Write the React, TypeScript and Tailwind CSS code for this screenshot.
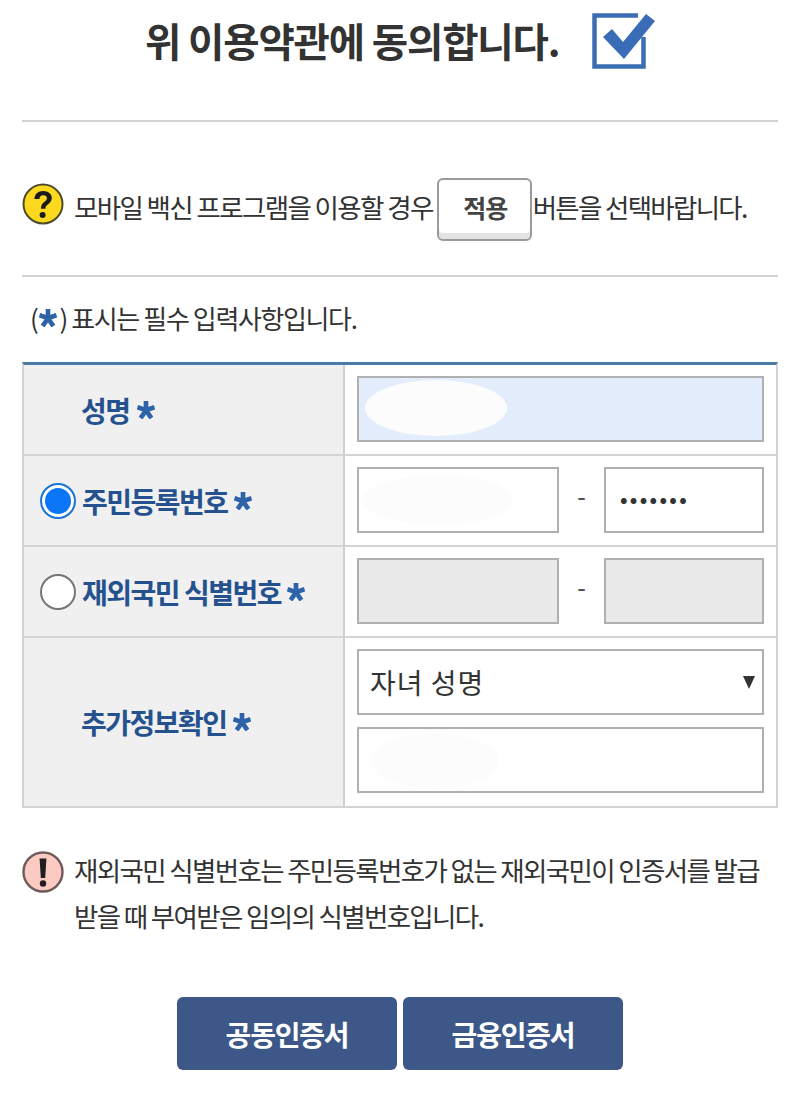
const font = "font-['Noto_Sans_CJK_KR','Noto_Sans',sans-serif]";

function Star({ className = "" }: { className?: string }) {
  return (
    <svg viewBox="0 0 20 20" className={`inline-block w-[18px] h-[18px] ${className}`}>
      <g stroke="#2f63a8" strokeWidth="5.2" strokeLinecap="butt">
        <line x1="10" y1="0" x2="10" y2="12" />
        <line x1="0.5" y1="7" x2="12" y2="10.8" />
        <line x1="19.5" y1="7" x2="8" y2="10.8" />
        <line x1="4" y1="19" x2="11" y2="9" />
        <line x1="16" y1="19" x2="9" y2="9" />
      </g>
    </svg>
  );
}

function Radio({ checked }: { checked: boolean }) {
  return checked ? (
    <span className="shrink-0 w-[36px] h-[36px] rounded-full border-[2px] border-[#1a73d8] bg-white flex items-center justify-center">
      <span className="w-[26px] h-[26px] rounded-full bg-[#0a76f6]" />
    </span>
  ) : (
    <span className="shrink-0 w-[36px] h-[36px] rounded-full border-[2px] border-[#767676] bg-white" />
  );
}

function Label({ children, className = "" }: { children: React.ReactNode; className?: string }) {
  return (
    <span className={`text-[28px] font-bold text-[#25528f] tracking-[-1.5px] leading-none ${className}`}>{children}</span>
  );
}

function Box({ className = "", children }: { className?: string; children?: React.ReactNode }) {
  return (
    <div className={`relative h-[66px] border-[2px] border-[#b0b0b0] ${className}`}>{children}</div>
  );
}

function Head({ children, className = "" }: { children: React.ReactNode; className?: string }) {
  return (
    <div className={`bg-[#f0f0f0] border-r-[2px] border-r-[#d0d0d0] flex items-center ${className}`}>{children}</div>
  );
}

function Dash() {
  return <span className="w-[45px] text-center text-[24px] font-medium leading-[58px] text-[#555]">-</span>;
}

function HelpIcon() {
  return (
    <svg viewBox="0 0 42 42" className="w-[42px] h-[42px] shrink-0 -translate-y-[3px]">
      <circle cx="21" cy="21" r="19.5" fill="#fcd91f" stroke="#4f4a2a" strokeWidth="2" />
      <path d="M12.5 16c0-5 3.6-8 8.7-8 5.2 0 8.6 2.9 8.6 7 0 3.2-1.9 4.8-4 6.4-1.8 1.3-2.4 2.2-2.4 4.4h-4.4c0-3.5 1-5.1 3.2-6.8 1.7-1.3 2.7-2.2 2.7-3.7 0-1.8-1.3-3-3.6-3-2.4 0-3.8 1.5-3.9 3.7z" fill="#1b1b1b" />
      <circle cx="20.6" cy="32" r="3" fill="#1b1b1b" />
    </svg>
  );
}

function AlertIcon() {
  return (
    <svg viewBox="0 0 42 42" className="w-[42px] h-[42px] shrink-0">
      <circle cx="21" cy="21" r="19.5" fill="#fcc9c3" stroke="#6e5b59" strokeWidth="2.4" />
      <path d="M17.6 7.5h6.8l-1.2 19.5h-4.4z" fill="#1f1f1f" />
      <circle cx="21" cy="32.5" r="3.2" fill="#1f1f1f" />
    </svg>
  );
}

export default function App() {
  return (
    <div className={`${font} w-[800px] h-[1098px] bg-white overflow-hidden px-[22px] text-[#333]`}>
      <div className="h-[120px] pt-[13px] flex items-start">
        <h1 className="ml-[123px] -mt-[1px] text-[39.5px] leading-[56px] font-bold tracking-[-1.15px] text-[#333] whitespace-nowrap">
          위 이용약관에 동의합니다.
        </h1>
        <svg viewBox="0 0 64 56" className="w-[64px] h-[56px] ml-[33px] shrink-0">
          <path d="M46 2.5H2.5v51h49V24" fill="none" stroke="#3b6db5" strokeWidth="4.5" />
          <path d="M11 24l9-8 11 13L54 1l9 7-31 38z" fill="#3a6cb8" />
        </svg>
      </div>
      <div className="h-[2px] bg-[#d2d2d2]" />

      <div className="h-[153px] flex items-center pt-[16px] whitespace-nowrap">
        <HelpIcon />
        <span className="ml-[10px] text-[26.5px] tracking-[-1.62px] text-[#333]">모바일 백신 프로그램을 이용할 경우</span>
        <button className="ml-[4px] mt-[6px] w-[95px] h-[63px] rounded-[6px] border-[2px] border-[#9a9a9a] bg-white shadow-[inset_0_-6px_0_#e4e4e4] text-[25px] font-bold text-[#444] tracking-[-1px] flex items-center justify-center pb-[4px] pl-[2px]">
          적용
        </button>
        <span className="ml-[1px] text-[26.5px] tracking-[-1.7px] text-[#333]">버튼을 선택바랍니다.</span>
      </div>
      <div className="h-[2px] bg-[#d2d2d2]" />

      <div className="h-[85px] pt-[22px] pl-[8px] flex items-start text-[26px] leading-[38px] tracking-[-1.38px] text-[#333] whitespace-nowrap">
        <span>(</span>
        <Star className="mt-[10px] mx-[2px]" />
        <span>) 표시는 필수 입력사항입니다.</span>
      </div>

      <div className="w-[756px] border-x-[2px] border-b-[2px] border-[#d4d4d4] border-t-[3px] border-t-[#4d7aa6] grid grid-cols-[321px_1fr] grid-rows-[91px_91px_91px_168px] [&>*]:border-b-[2px] [&>*]:border-b-[#d4d4d4] [&>*:nth-last-child(-n+2)]:border-b-0">
        <Head className="pl-[57px] gap-[7px]">
          <Label>성명</Label>
          <Star />
        </Head>
        <div className="pl-[12px] pr-[12px] pt-[11px]">
          <Box className="bg-[#e4edfb]">
            <div className="absolute left-[6px] top-[2px] w-[142px] h-[56px] rounded-[50%] bg-[#fcfcfc]" />
          </Box>
        </div>

        <Head className="pl-[16px] gap-[6px]">
          <Radio checked />
          <Label>주민등록번호</Label>
          <Star />
        </Head>
        <div className="pl-[12px] pr-[12px] pt-[11px] flex items-start">
          <Box className="w-[202px] bg-white">
            <div className="absolute left-[4px] top-[6px] w-[150px] h-[50px] rounded-[50%] bg-[#fcfcfc]" />
          </Box>
          <Dash />
          <Box className="w-[160px] bg-white flex items-center pl-[14px] text-[20px] tracking-[2.3px] text-[#333] font-bold leading-none">
            <span className="-mt-[3px]">•••••••</span>
          </Box>
        </div>

        <Head className="pl-[16px] gap-[6px]">
          <Radio checked={false} />
          <Label>재외국민 식별번호</Label>
          <Star />
        </Head>
        <div className="pl-[12px] pr-[12px] pt-[11px] flex items-start">
          <Box className="w-[202px] bg-[#e9e9e9]" />
          <Dash />
          <Box className="w-[160px] bg-[#e9e9e9]" />
        </div>

        <Head className="pl-[57px] gap-[6px]">
          <Label>추가정보확인</Label>
          <Star />
        </Head>
        <div className="pl-[12px] pr-[12px] pt-[11px] flex flex-col gap-[12px]">
          <Box className="bg-white flex items-center justify-between pl-[11px] pr-[7px]">
            <span className="text-[28px] text-[#333] tracking-[1px]">자녀 성명</span>
            <svg viewBox="0 0 12 13" className="w-[12px] h-[13px]">
              <path d="M0 0h12L6 13z" fill="#333" />
            </svg>
          </Box>
          <Box className="bg-white">
            <div className="absolute left-[12px] top-[4px] w-[128px] h-[56px] rounded-[50%] bg-[#fcfcfc]" />
          </Box>
        </div>
      </div>

      <div className="mt-[39px] flex items-start">
        <div className="mt-[4px]"><AlertIcon /></div>
        <p className="ml-[10px] text-[26.5px] leading-[46px] tracking-[-1.65px] text-[#333] w-[700px]">
          재외국민 식별번호는 주민등록번호가 없는 재외국민이 인증서를 발급 받을 때 부여받은 임의의 식별번호입니다.
        </p>
      </div>

      <div className="mt-[58px] ml-[155px] flex gap-[6px]">
        <button className="w-[220px] h-[73px] rounded-[6px] bg-[#3d5888] text-white text-[28px] font-bold tracking-[-1.2px]">공동인증서</button>
        <button className="w-[220px] h-[73px] rounded-[6px] bg-[#3d5888] text-white text-[28px] font-bold tracking-[-1.2px]">금융인증서</button>
      </div>
    </div>
  );
}
